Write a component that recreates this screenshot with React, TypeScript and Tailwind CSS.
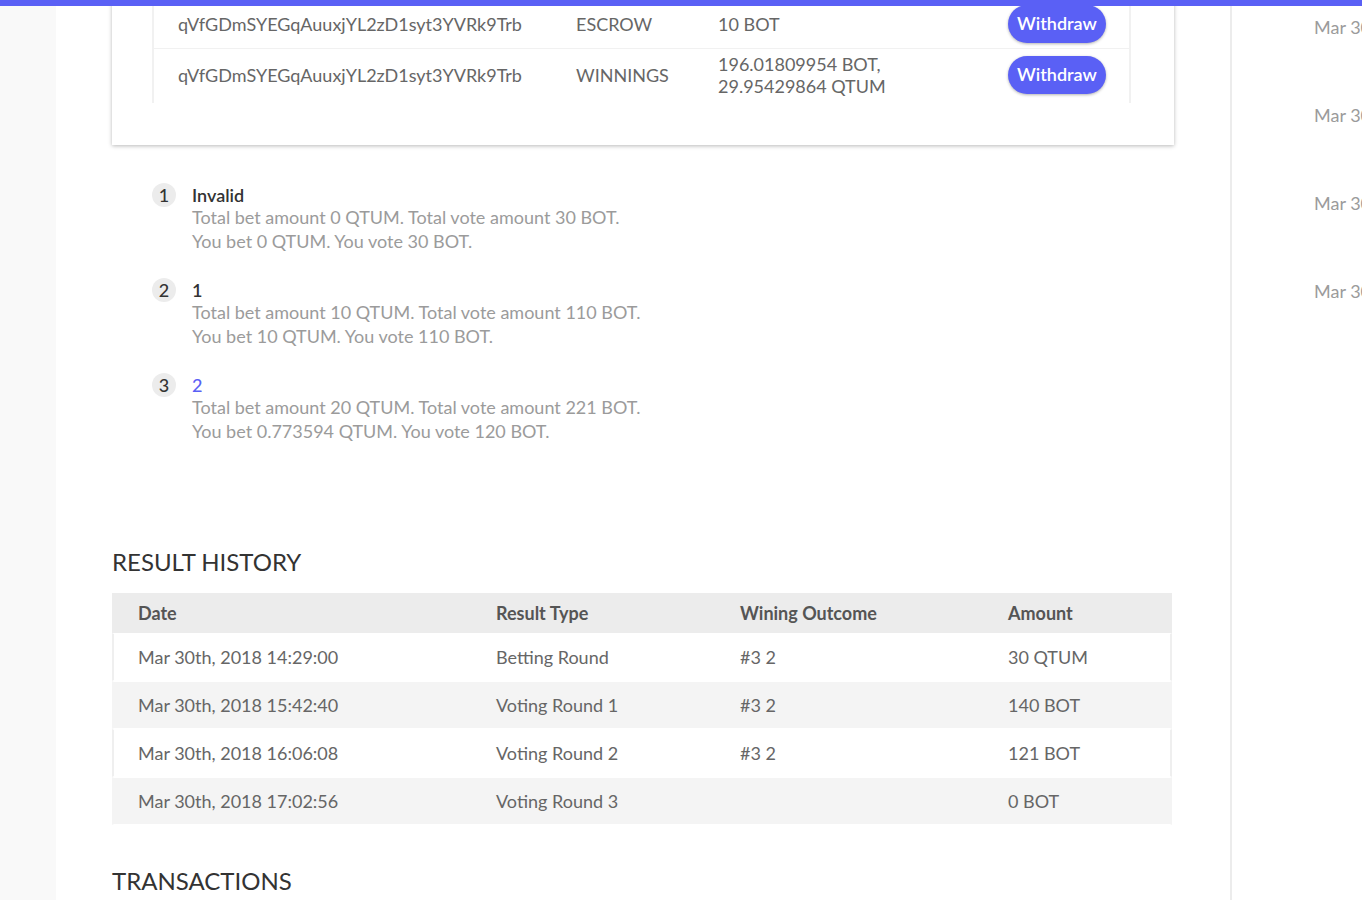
import React from "react";

const address = "qVfGDmSYEGqAuuxjYL2zD1syt3YVRk9Trb";

const withdrawals = [
  { address, type: "ESCROW", amount: ["10 BOT"] },
  { address, type: "WINNINGS", amount: ["196.01809954 BOT,", "29.95429864 QTUM"] },
];

const outcomes = [
  {
    idx: 1,
    name: "Invalid",
    total: "Total bet amount 0 QTUM. Total vote amount 30 BOT.",
    mine: "You bet 0 QTUM. You vote 30 BOT.",
    winner: false,
  },
  {
    idx: 2,
    name: "1",
    total: "Total bet amount 10 QTUM. Total vote amount 110 BOT.",
    mine: "You bet 10 QTUM. You vote 110 BOT.",
    winner: false,
  },
  {
    idx: 3,
    name: "2",
    total: "Total bet amount 20 QTUM. Total vote amount 221 BOT.",
    mine: "You bet 0.773594 QTUM. You vote 120 BOT.",
    winner: true,
  },
];

const history = [
  { date: "Mar 30th, 2018 14:29:00", type: "Betting Round", outcome: "#3 2", amount: "30 QTUM" },
  { date: "Mar 30th, 2018 15:42:40", type: "Voting Round 1", outcome: "#3 2", amount: "140 BOT" },
  { date: "Mar 30th, 2018 16:06:08", type: "Voting Round 2", outcome: "#3 2", amount: "121 BOT" },
  { date: "Mar 30th, 2018 17:02:56", type: "Voting Round 3", outcome: "", amount: "0 BOT" },
];

const sideDates = ["Mar 30th, 2018", "Mar 30th, 2018", "Mar 30th, 2018", "Mar 30th, 2018"];

function WithdrawCard(): React.ReactElement {
  return (
    <section className="w-[1062px] bg-white px-10 pb-[42px] shadow-[0_1px_4px_rgba(0,0,0,0.28)]">
      <div className="w-[979px] border-x-2 border-[#f1f1f1]">
        {withdrawals.map((row, i) => (
          <div
            className={
              "grid grid-cols-[396px_142px_290px_147px] items-center text-[18px] leading-[22px] text-[#666] " +
              (i === 0 ? "border-b border-[#f1f1f1] py-[5px]" : "pb-[6px] pt-[4px]")
            }
            key={row.type}
          >
            <div className="pl-[24px]">{row.address}</div>
            <div className="pl-[26px]">{row.type}</div>
            <div className="pl-[26px]">
              {row.amount.map((line) => (
                <div key={line}>{line}</div>
              ))}
            </div>
            <div className="pl-[26px]">
              <button
                className="h-[38px] w-[98px] rounded-full bg-[#5a60f5] pb-[3px] text-[18px] font-semibold text-white shadow-[0_1px_3px_rgba(0,0,0,0.3)]"
                type="button"
              >
                Withdraw
              </button>
            </div>
          </div>
        ))}
      </div>
    </section>
  );
}

function OutcomeList(): React.ReactElement {
  return (
    <ol className="mt-[38px] flex flex-col gap-[25px] pl-10">
      {outcomes.map((o) => (
        <li className="flex gap-4" key={o.idx}>
          <span className="flex h-6 w-6 shrink-0 items-center justify-center rounded-full bg-[#ececec] text-[18px] font-medium text-[#333]">
            {o.idx}
          </span>
          <div className="text-[18px]">
            <div
              className={
                "pt-[1px] leading-[22px] " +
                (o.winner ? "font-medium text-[#5a60f5]" : "font-semibold text-[#333]")
              }
            >
              {o.name}
            </div>
            <div className="-mt-[1px] leading-6 text-[#9b9b9b]">{o.total}</div>
            <div className="leading-6 text-[#9b9b9b]">{o.mine}</div>
          </div>
        </li>
      ))}
    </ol>
  );
}

function ResultHistory(): React.ReactElement {
  return (
    <section className="mt-[104px]">
      <h2 className="text-[24px] leading-[30px] text-[#333]">RESULT HISTORY</h2>
      <div className="mt-4 w-[1060px]">
        <div className="grid h-10 grid-cols-[358px_244px_268px_190px] items-center bg-[#ececec] text-[18px] font-bold text-[#555]">
          <div className="pl-[26px]">Date</div>
          <div className="pl-[26px]">Result Type</div>
          <div className="pl-[26px]">Wining Outcome</div>
          <div className="pl-[26px]">Amount</div>
        </div>
        {history.map((row, i) => (
          <div
            className={
              "grid h-12 grid-cols-[358px_244px_268px_190px] items-center border-x-2 border-y border-y-white text-[18px] text-[#666] " +
              (i % 2 === 0 ? "border-x-[#efefef] bg-white" : "border-x-[#f4f4f4] bg-[#f4f4f4]")
            }
            key={row.date}
          >
            <div className="pl-6">{row.date}</div>
            <div className="pl-6">{row.type}</div>
            <div className="pl-6">{row.outcome}</div>
            <div className="pl-6">{row.amount}</div>
          </div>
        ))}
      </div>
    </section>
  );
}

export default function App(): React.ReactElement {
  return (
    <div className="relative h-[900px] w-[1362px] overflow-hidden bg-white font-['Lato','Noto_Sans',sans-serif]">
      <div className="absolute inset-x-0 top-0 z-10 h-[6px] bg-[#5a60f5]" />
      <div className="flex h-full">
        <div className="w-14 shrink-0 bg-[#f9f9f9]" />
        <main className="w-[1174px] shrink-0 pl-14">
          <WithdrawCard />
          <OutcomeList />
          <ResultHistory />
          <h2 className="mt-[41px] text-[24px] leading-[30px] text-[#333]">TRANSACTIONS</h2>
        </main>
        <aside className="flex-1 overflow-hidden border-l-2 border-[#ececec] pl-[82px] pt-[16px]">
          <ul className="flex flex-col gap-[66px]">
            {sideDates.map((d, i) => (
              <li className="whitespace-nowrap text-[18px] leading-[22px] text-[#9b9b9b]" key={i}>
                {d}
              </li>
            ))}
          </ul>
        </aside>
      </div>
    </div>
  );
}
